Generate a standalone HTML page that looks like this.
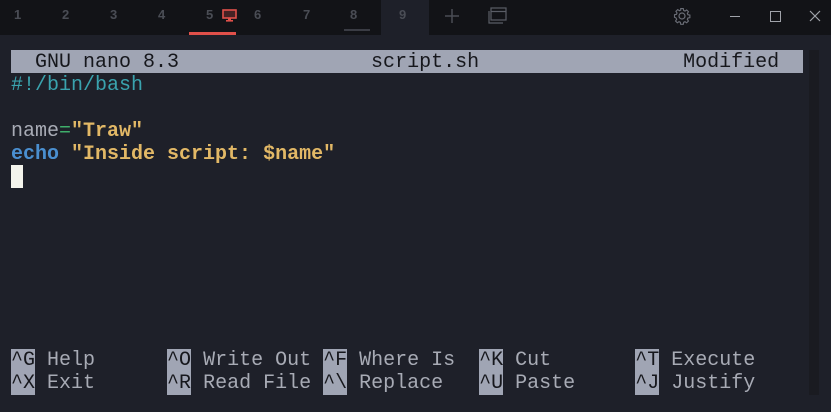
<!DOCTYPE html>
<html><head><style>
html,body{margin:0;padding:0;width:831px;height:412px;overflow:hidden;background:#1e2029;}
#tb{position:absolute;left:0;top:0;width:831px;height:35px;background:#121317;}
.tn{position:absolute;top:7px;font:bold 13px "Liberation Sans",sans-serif;color:#4a4d55;}
.t{position:absolute;font:20px/23px "Liberation Mono",monospace;white-space:pre;}
.hl{background:#a0a5b4;color:#16171c;}
.g{color:#a8abb5;}
</style></head><body>
<div id="tb">
<span class="tn" style="left:14px">1</span>
<span class="tn" style="left:62px">2</span>
<span class="tn" style="left:110px">3</span>
<span class="tn" style="left:158px">4</span>
<span class="tn" style="left:206px">5</span>
<svg style="position:absolute;left:222px;top:9px" width="15" height="14"><rect x="1" y="1" width="13" height="8" fill="none" stroke="#e0504a" stroke-width="1.6"/><rect x="1" y="1" width="13" height="8" fill="#e0504a" opacity=".25"/><rect x="6" y="9" width="3" height="2" fill="#e0504a"/><rect x="4" y="11" width="7" height="1.6" fill="#e0504a"/></svg>
<span class="tn" style="left:254px">6</span>
<span class="tn" style="left:303px">7</span>
<span class="tn" style="left:350px">8</span>
<div style="position:absolute;left:344px;top:29px;width:26px;height:2px;background:#3a3c44"></div>
<div style="position:absolute;left:381px;top:0;width:48px;height:35px;background:#1e2029"></div>
<span class="tn" style="left:399px">9</span>
<div style="position:absolute;left:189px;top:32px;width:47px;height:3px;background:#e0504a"></div>
<svg style="position:absolute;left:444px;top:8px" width="16" height="16"><path d="M8 1V15M1 8H15" stroke="#4a4d55" stroke-width="1.5"/></svg>
<svg style="position:absolute;left:488px;top:7px" width="20" height="18"><rect x="3" y="1" width="15" height="12" fill="none" stroke="#5a5d66" stroke-width="1.2"/><path d="M3 4.5H18M1 4V16H15" fill="none" stroke="#5a5d66" stroke-width="1.2"/></svg>
<svg style="position:absolute;left:673px;top:7px" width="18" height="18" viewBox="0 0 24 24"><path d="M12 8a4 4 0 1 0 0 8a4 4 0 1 0 0-8z" fill="none" stroke="#6a6d76" stroke-width="1.6"/><path d="M10.3 2h3.4l.5 2.6 1.8.8 2.2-1.5 2.4 2.4-1.5 2.2.8 1.8 2.6.5v3.4l-2.6.5-.8 1.8 1.5 2.2-2.4 2.4-2.2-1.5-1.8.8-.5 2.6h-3.4l-.5-2.6-1.8-.8-2.2 1.5-2.4-2.4 1.5-2.2-.8-1.8L2 13.7v-3.4l2.6-.5.8-1.8-1.5-2.2 2.4-2.4 2.2 1.5 1.8-.8z" fill="none" stroke="#6a6d76" stroke-width="1.5"/></svg>
<div style="position:absolute;left:730px;top:16px;width:10px;height:1px;background:#a0a3aa"></div>
<div style="position:absolute;left:770px;top:11px;width:9px;height:9px;border:1px solid #a0a3aa"></div>
<svg style="position:absolute;left:809px;top:10px" width="12" height="12"><path d="M1 1L11 11M11 1L1 11" stroke="#a0a3aa" stroke-width="1.2"/></svg>
</div>
<div style="position:absolute;left:809px;top:50px;width:10px;height:345px;background:#1a1b21"></div>
<div style="position:absolute;left:11px;top:50px;width:792px;height:23px;background:#a0a5b4"></div>
<div class="t" style="left:11px;top:51px;color:#16171c">  GNU nano 8.3                script.sh                 Modified</div>
<div class="t" style="left:11px;top:74px;color:#3aa3ae">#!/bin/bash</div>
<div class="t" style="left:11px;top:120px"><span class="g">name</span><span style="color:#3fae6a">=</span><b style="color:#e2b866">"Traw"</b></div>
<div class="t" style="left:11px;top:143px"><b style="color:#4a8fd0">echo</b> <b style="color:#e2b866">"Inside script: $name"</b></div>
<div style="position:absolute;left:11px;top:165px;width:12px;height:23px;background:#f4f4ec"></div>
<div class="t g" style="left:11px;top:349px"><span class="hl">^G</span> Help      <span class="hl">^O</span> Write Out <span class="hl">^F</span> Where Is  <span class="hl">^K</span> Cut       <span class="hl">^T</span> Execute</div>
<div class="t g" style="left:11px;top:372px"><span class="hl">^X</span> Exit      <span class="hl">^R</span> Read File <span class="hl">^\</span> Replace   <span class="hl">^U</span> Paste     <span class="hl">^J</span> Justify</div>
</body></html>
